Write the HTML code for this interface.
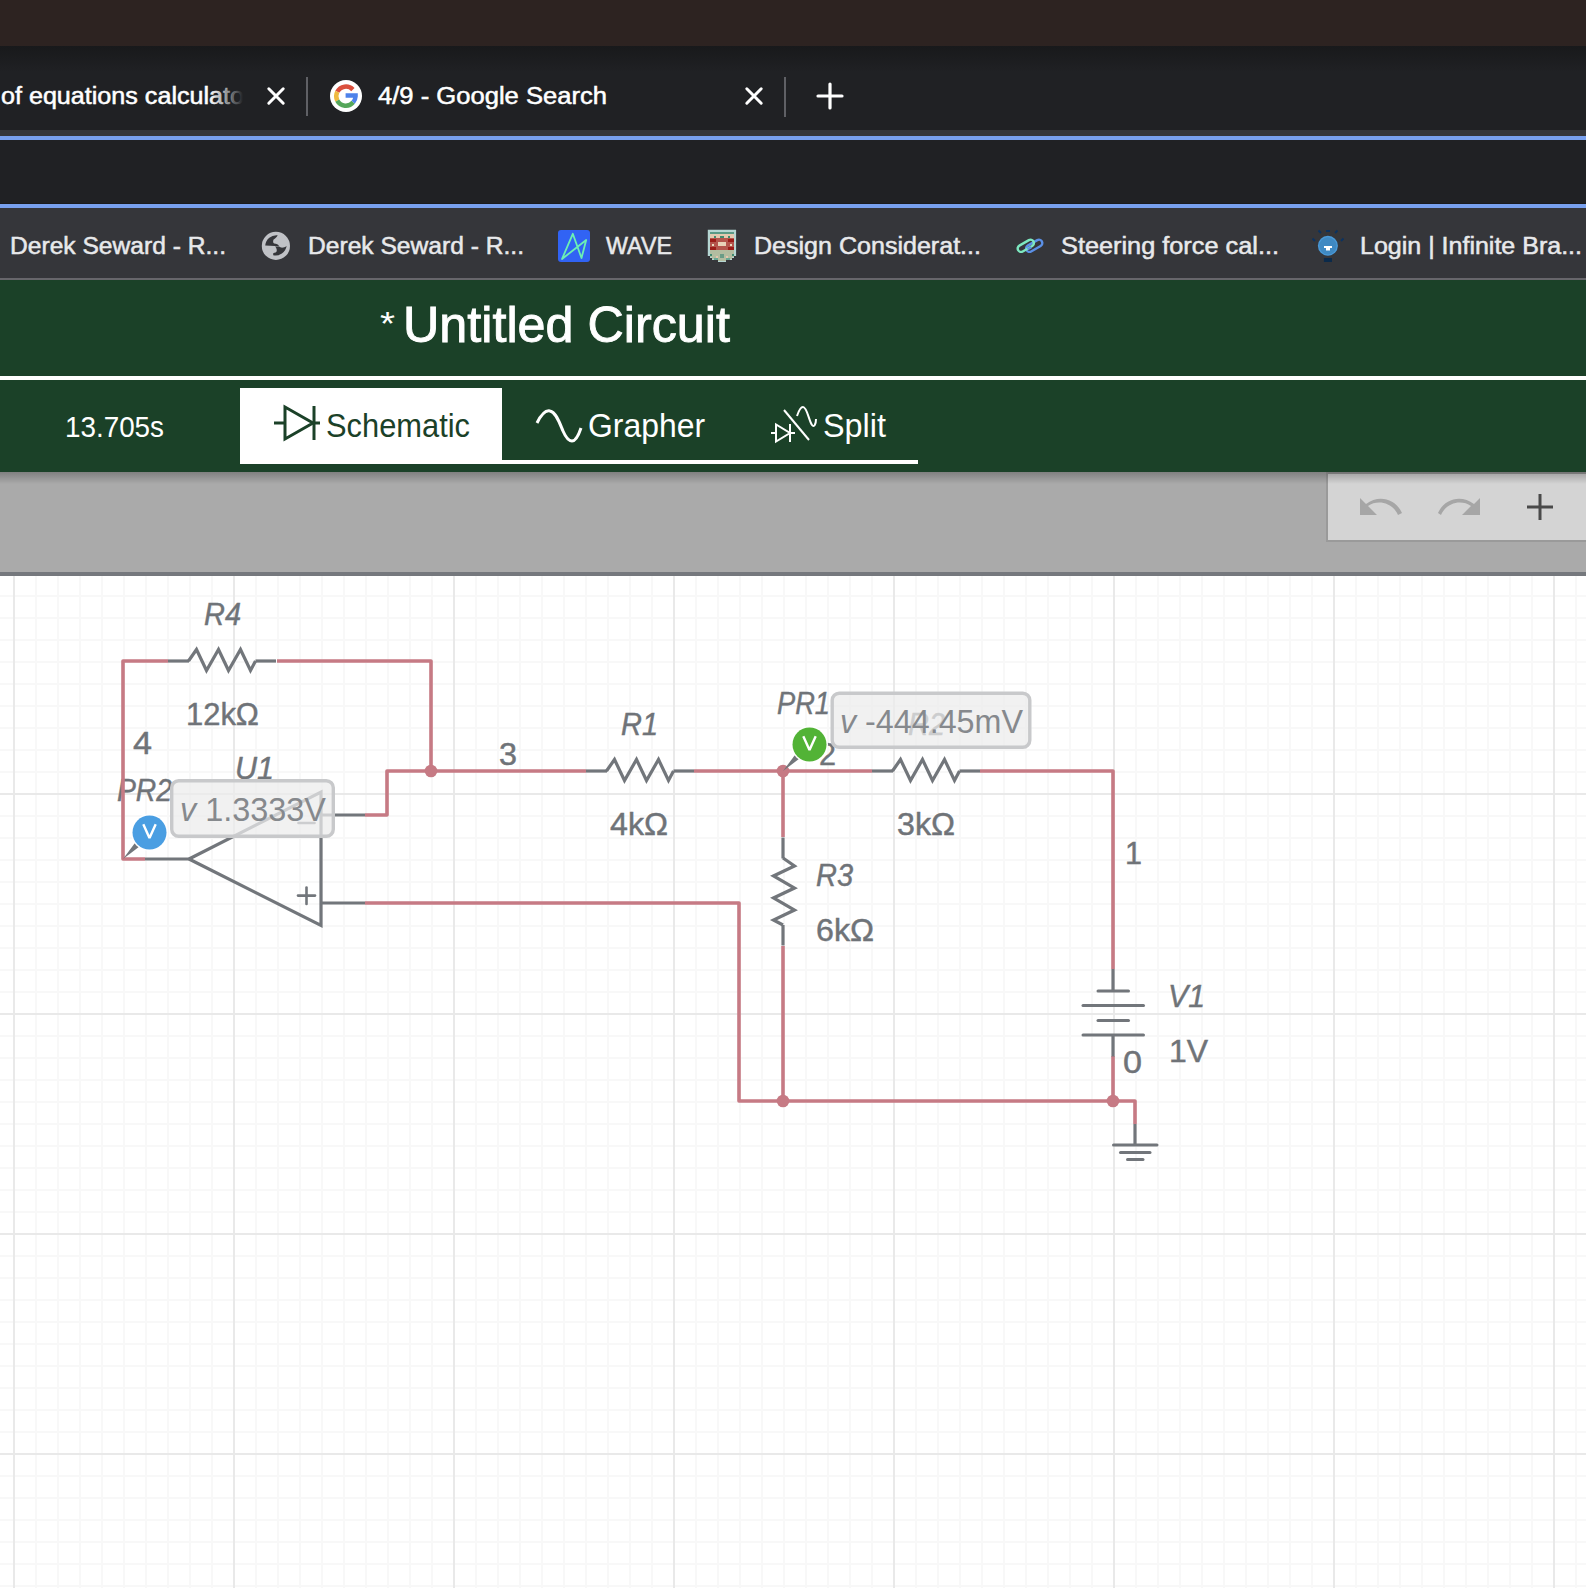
<!DOCTYPE html>
<html><head><meta charset="utf-8"><title>Untitled Circuit</title>
<style>html,body{margin:0;padding:0;width:1586px;height:1588px;overflow:hidden;background:#fff;font-family:"Liberation Sans",sans-serif}svg{display:block}</style>
</head><body><svg width="1586" height="1588" viewBox="0 0 1586 1588" font-family="'Liberation Sans', sans-serif"><rect x="0" y="0" width="1586" height="46" fill="#2d2321"/>
<rect x="0" y="46" width="1586" height="84" fill="#202124"/>
<defs><linearGradient id="tabg" x1="0" x2="0" y1="0" y2="1"><stop offset="0" stop-color="#18191b"/><stop offset="1" stop-color="#202124"/></linearGradient></defs>
<rect x="0" y="46" width="1586" height="26" fill="url(#tabg)"/>
<rect x="0" y="130" width="1586" height="6" fill="#35363a"/>
<rect x="0" y="136" width="1586" height="4" fill="#78a0ee"/>
<rect x="0" y="140" width="1586" height="64" fill="#202124"/>
<rect x="0" y="203" width="1586" height="1" fill="#1a1b1d"/>
<rect x="0" y="204" width="1586" height="4" fill="#78a0ee"/>
<rect x="0" y="208" width="1586" height="70" fill="#35363a"/>
<rect x="0" y="278" width="1586" height="2" fill="#67666b"/>
<defs><linearGradient id="fade" gradientUnits="userSpaceOnUse" x1="209" x2="243" y1="0" y2="0"><stop offset="0" stop-color="#ffffff"/><stop offset="1" stop-color="#ffffff" stop-opacity="0"/></linearGradient></defs>
<text x="1" y="104" font-size="23.5" fill="url(#fade)" textLength="243" lengthAdjust="spacingAndGlyphs" text-anchor="start"  stroke="url(#fade)" stroke-width="0.5">of equations calculato</text>
<path d="M268.8 88.8 L283.2 103.2 M283.2 88.8 L268.8 103.2" stroke="#ffffff" stroke-width="3" stroke-linecap="round"/>
<rect x="306" y="77" width="2" height="39" fill="#5f6065"/>
<circle cx="346" cy="96" r="16" fill="#ffffff"/>
<g transform="translate(345.9 96)" fill="none" stroke-width="4.5"><path d="M7.0 -6.4 A9.65 9.65 0 0 0 -8.6 -4.2" stroke="#da4f3d"/><path d="M-8.6 -4.2 A9.65 9.65 0 0 0 -8.6 4.6" stroke="#efba41"/><path d="M-8.6 4.6 A9.65 9.65 0 0 0 7.3 6.3" stroke="#55a65a"/><path d="M7.3 6.3 A9.65 9.65 0 0 0 9.65 0.5 V-0.4 H-0.3" stroke="#4e82ea"/></g>
<text x="378" y="104" font-size="23.5" fill="#ffffff" textLength="229" lengthAdjust="spacingAndGlyphs" text-anchor="start"  stroke="#ffffff" stroke-width="0.5">4/9 - Google Search</text>
<path d="M746.8 88.8 L761.2 103.2 M761.2 88.8 L746.8 103.2" stroke="#ffffff" stroke-width="3" stroke-linecap="round"/>
<rect x="784" y="77" width="2" height="40" fill="#5f6065"/>
<path d="M830 84 V108 M818 96 H842" stroke="#ffffff" stroke-width="3.2" stroke-linecap="round"/>
<text x="10" y="254" font-size="23.5" fill="#e8e9eb" textLength="216" lengthAdjust="spacingAndGlyphs" text-anchor="start"  stroke="#e8e9eb" stroke-width="0.5">Derek Seward - R...</text>
<circle cx="275.9" cy="245.9" r="14.1" fill="#c0c2c6"/>
<path d="M265.2 245.4 A11.2 11.2 0 0 1 277.7 235.3 C276.6 237.5 275.2 238.5 273.6 239.6 C272.8 241.5 273.0 243.0 274.2 243.6 C276.5 244.0 278.4 244.4 279.1 246.3 L274.9 246.0 Z" fill="#35363a"/><path d="M286.6 246.1 A11.2 11.2 0 0 1 273.2 255.3 L273.2 253.3 C274.8 252.6 276.8 252.6 276.8 250.5 C276.7 248.9 276.2 247.6 275.0 246.6 L279.3 246.6 C280.0 247.4 281.5 247.9 283.3 247.6 C284.7 247.4 285.6 246.9 286.6 246.1 Z" fill="#35363a"/>
<text x="308" y="254" font-size="23.5" fill="#e8e9eb" textLength="216" lengthAdjust="spacingAndGlyphs" text-anchor="start"  stroke="#e8e9eb" stroke-width="0.5">Derek Seward - R...</text>
<rect x="558" y="230" width="32" height="32" rx="3" fill="#3163f4"/>
<path d="M562 259 L572.8 233.8 L581.5 258 L586.2 240 Z" stroke="#6cf0b4" stroke-width="1.8" fill="none" stroke-linejoin="round"/>
<text x="606" y="254" font-size="23.5" fill="#e8e9eb" textLength="66" lengthAdjust="spacingAndGlyphs" text-anchor="start"  stroke="#e8e9eb" stroke-width="0.5">WAVE</text>
<path d="M707.8 229.8 H736.1 V256 H734 V258 H732 V260 H726 V262 H718 V260 H712 V258 H710 V256 H707.8 Z" fill="#b5d6d3"/><path d="M710 232 H734 V257 H732 V259 H726 V261 H718 V259 H712 V257 H710 Z" fill="#b3bda0"/><rect x="710" y="232" width="24" height="2" fill="#5a9a86"/><rect x="710" y="234" width="24" height="4" fill="#e3c9b0"/><rect x="714" y="236" width="2" height="2" fill="#3f8a70"/><rect x="720" y="236" width="4" height="2" fill="#3f8a70"/><rect x="728" y="236" width="2" height="2" fill="#3f8a70"/><rect x="710" y="238" width="24" height="12" fill="#b4554c"/><rect x="710" y="239" width="6" height="3" fill="#9b1d18"/><rect x="728" y="239" width="6" height="3" fill="#9b1d18"/><rect x="710" y="247" width="6" height="3" fill="#9b1d18"/><rect x="728" y="247" width="6" height="3" fill="#9b1d18"/><rect x="718" y="242" width="8" height="4" fill="#e8d2b8"/><rect x="712" y="244" width="2" height="2" fill="#eadcc0"/><rect x="730" y="244" width="2" height="2" fill="#eadcc0"/><rect x="720" y="254" width="4" height="4" fill="#6a9c86"/><rect x="716" y="256" width="2" height="2" fill="#e6c6ae"/><rect x="726" y="256" width="2" height="2" fill="#e6c6ae"/><rect x="710" y="254" width="2" height="2" fill="#3f8a70"/><rect x="732" y="254" width="2" height="2" fill="#3f8a70"/><rect x="714" y="258" width="4" height="2" fill="#6aa894"/><rect x="726" y="258" width="4" height="2" fill="#6aa894"/>
<text x="754" y="254" font-size="23.5" fill="#e8e9eb" textLength="227" lengthAdjust="spacingAndGlyphs" text-anchor="start"  stroke="#e8e9eb" stroke-width="0.5">Design Considerat...</text>
<g fill="none" stroke-width="2.4"><rect transform="translate(1034.2 245.8) rotate(-30)" x="-8.85" y="-3.35" width="17.7" height="6.7" rx="3.35" stroke="#5b90e6"/><rect transform="translate(1025.8 245.8) rotate(-30)" x="-8.85" y="-3.35" width="17.7" height="6.7" rx="3.35" stroke="#7de8c0"/><path d="M1027.6 249.3 L1031.3 247.2" stroke="#5b90e6"/></g>
<text x="1061" y="254" font-size="23.5" fill="#e8e9eb" textLength="218" lengthAdjust="spacingAndGlyphs" text-anchor="start"  stroke="#e8e9eb" stroke-width="0.5">Steering force cal...</text>
<circle cx="1327.9" cy="245.8" r="10" fill="#4a9ad8"/><circle cx="1327.9" cy="245.8" r="8.6" fill="#3f89c2"/><rect x="1323.9" y="258" width="8.1" height="4" fill="#0b2a4a"/><rect x="1324" y="246" width="8" height="2" fill="#ffffff"/><rect x="1326" y="247.5" width="4" height="3" fill="#ffffff"/><rect x="1326" y="230" width="4" height="2" fill="#0b3260"/><path d="M1318.5 230.5 l2.5 2.5 M1337.5 230.5 l-2.5 2.5 M1312.5 238.5 l2.5 2.5 M1343.5 238.5 l-2.5 2.5" stroke="#0b3260" stroke-width="1.8"/>
<text x="1360" y="254" font-size="23.5" fill="#e8e9eb" textLength="222" lengthAdjust="spacingAndGlyphs" text-anchor="start"  stroke="#e8e9eb" stroke-width="0.5">Login | Infinite Bra...</text>
<rect x="0" y="280" width="1586" height="96" fill="#1b4128"/>
<rect x="0" y="376" width="1586" height="4" fill="#ffffff"/>
<rect x="0" y="380" width="1586" height="92" fill="#1b4128"/>
<text x="380" y="335" font-size="33" fill="#ffffff" textLength="15" lengthAdjust="spacingAndGlyphs" text-anchor="start" >*</text>
<text x="403" y="342" font-size="50" fill="#ffffff" textLength="327" lengthAdjust="spacingAndGlyphs" text-anchor="start"  stroke="#ffffff" stroke-width="0.9">Untitled Circuit</text>
<text x="65" y="437" font-size="30" fill="#ffffff" textLength="99" lengthAdjust="spacingAndGlyphs" text-anchor="start" >13.705s</text>
<rect x="240" y="388" width="262" height="76" fill="#ffffff"/>
<rect x="502" y="460" width="416" height="4" fill="#ffffff"/>
<g stroke="#1b4128" stroke-width="3" fill="none"><path d="M274 423 H285 M313 423 H320"/><path d="M285 407 V439 L313 423 Z"/><path d="M314 406 V440"/></g>
<text x="326" y="437" font-size="33" fill="#1b4128" textLength="144" lengthAdjust="spacingAndGlyphs" text-anchor="start" >Schematic</text>
<path d="M537 423 C542 413 546 410 550 411 C556 412 560 424 563 431 C566 438 569 441 572 441 C576 441 579 434 581 428" stroke="#ffffff" stroke-width="3" fill="none"/>
<text x="588" y="437" font-size="33" fill="#ffffff" textLength="117" lengthAdjust="spacingAndGlyphs" text-anchor="start" >Grapher</text>
<g stroke="#ffffff" stroke-width="2" fill="none"><path d="M771 433 H776 M790 433 H795"/><path d="M776 424.5 V441.5 L790 433 Z"/><path d="M790 424 V442"/><path d="M784 410 L809 440"/><path d="M797 416 C799 410 801 407 803 407 C807 407 809 421 812 425 C814 428 816 424 816 419"/></g>
<text x="823" y="437" font-size="33" fill="#ffffff" textLength="63" lengthAdjust="spacingAndGlyphs" text-anchor="start" >Split</text>
<rect x="0" y="472" width="1586" height="100" fill="#aaaaaa"/>
<defs><linearGradient id="tsh" x1="0" x2="0" y1="0" y2="1"><stop offset="0" stop-color="#000" stop-opacity="0.25"/><stop offset="1" stop-color="#000" stop-opacity="0"/></linearGradient></defs>
<rect x="0" y="472" width="1586" height="12" fill="url(#tsh)"/>
<rect x="1326" y="472" width="260" height="70" fill="#9a9a9a"/>
<rect x="1328" y="474" width="258" height="66" fill="#d4d4d4"/>
<rect x="1326" y="472" width="260" height="12" fill="url(#tsh)"/>
<g fill="#a6a6a6"><path d="M1398 515 C1393 503 1378 499 1368 506 L1377 515 H1360 V498 L1366 504 C1379 494 1396 499 1402 513 Z"/><path d="M1441 515 C1446 503 1461 499 1471 506 L1462 515 H1480 V498 L1474 504 C1461 494 1444 499 1438 513 Z"/></g>
<path d="M1540 494 V520 M1527 507 H1553" stroke="#4a4a4a" stroke-width="3"/>
<rect x="0" y="572" width="1586" height="4" fill="#75787d"/>
<rect x="0" y="576" width="1586" height="1012" fill="#ffffff"/>
<rect x="35" y="576" width="2" height="1012" fill="#f8f8f8"/><rect x="57" y="576" width="2" height="1012" fill="#f8f8f8"/><rect x="79" y="576" width="2" height="1012" fill="#f8f8f8"/><rect x="101" y="576" width="2" height="1012" fill="#f8f8f8"/><rect x="123" y="576" width="2" height="1012" fill="#f8f8f8"/><rect x="145" y="576" width="2" height="1012" fill="#f8f8f8"/><rect x="167" y="576" width="2" height="1012" fill="#f8f8f8"/><rect x="189" y="576" width="2" height="1012" fill="#f8f8f8"/><rect x="211" y="576" width="2" height="1012" fill="#f8f8f8"/><rect x="255" y="576" width="2" height="1012" fill="#f8f8f8"/><rect x="277" y="576" width="2" height="1012" fill="#f8f8f8"/><rect x="299" y="576" width="2" height="1012" fill="#f8f8f8"/><rect x="321" y="576" width="2" height="1012" fill="#f8f8f8"/><rect x="343" y="576" width="2" height="1012" fill="#f8f8f8"/><rect x="365" y="576" width="2" height="1012" fill="#f8f8f8"/><rect x="387" y="576" width="2" height="1012" fill="#f8f8f8"/><rect x="409" y="576" width="2" height="1012" fill="#f8f8f8"/><rect x="431" y="576" width="2" height="1012" fill="#f8f8f8"/><rect x="475" y="576" width="2" height="1012" fill="#f8f8f8"/><rect x="497" y="576" width="2" height="1012" fill="#f8f8f8"/><rect x="519" y="576" width="2" height="1012" fill="#f8f8f8"/><rect x="541" y="576" width="2" height="1012" fill="#f8f8f8"/><rect x="563" y="576" width="2" height="1012" fill="#f8f8f8"/><rect x="585" y="576" width="2" height="1012" fill="#f8f8f8"/><rect x="607" y="576" width="2" height="1012" fill="#f8f8f8"/><rect x="629" y="576" width="2" height="1012" fill="#f8f8f8"/><rect x="651" y="576" width="2" height="1012" fill="#f8f8f8"/><rect x="695" y="576" width="2" height="1012" fill="#f8f8f8"/><rect x="717" y="576" width="2" height="1012" fill="#f8f8f8"/><rect x="739" y="576" width="2" height="1012" fill="#f8f8f8"/><rect x="761" y="576" width="2" height="1012" fill="#f8f8f8"/><rect x="783" y="576" width="2" height="1012" fill="#f8f8f8"/><rect x="805" y="576" width="2" height="1012" fill="#f8f8f8"/><rect x="827" y="576" width="2" height="1012" fill="#f8f8f8"/><rect x="849" y="576" width="2" height="1012" fill="#f8f8f8"/><rect x="871" y="576" width="2" height="1012" fill="#f8f8f8"/><rect x="915" y="576" width="2" height="1012" fill="#f8f8f8"/><rect x="937" y="576" width="2" height="1012" fill="#f8f8f8"/><rect x="959" y="576" width="2" height="1012" fill="#f8f8f8"/><rect x="981" y="576" width="2" height="1012" fill="#f8f8f8"/><rect x="1003" y="576" width="2" height="1012" fill="#f8f8f8"/><rect x="1025" y="576" width="2" height="1012" fill="#f8f8f8"/><rect x="1047" y="576" width="2" height="1012" fill="#f8f8f8"/><rect x="1069" y="576" width="2" height="1012" fill="#f8f8f8"/><rect x="1091" y="576" width="2" height="1012" fill="#f8f8f8"/><rect x="1135" y="576" width="2" height="1012" fill="#f8f8f8"/><rect x="1157" y="576" width="2" height="1012" fill="#f8f8f8"/><rect x="1179" y="576" width="2" height="1012" fill="#f8f8f8"/><rect x="1201" y="576" width="2" height="1012" fill="#f8f8f8"/><rect x="1223" y="576" width="2" height="1012" fill="#f8f8f8"/><rect x="1245" y="576" width="2" height="1012" fill="#f8f8f8"/><rect x="1267" y="576" width="2" height="1012" fill="#f8f8f8"/><rect x="1289" y="576" width="2" height="1012" fill="#f8f8f8"/><rect x="1311" y="576" width="2" height="1012" fill="#f8f8f8"/><rect x="1355" y="576" width="2" height="1012" fill="#f8f8f8"/><rect x="1377" y="576" width="2" height="1012" fill="#f8f8f8"/><rect x="1399" y="576" width="2" height="1012" fill="#f8f8f8"/><rect x="1421" y="576" width="2" height="1012" fill="#f8f8f8"/><rect x="1443" y="576" width="2" height="1012" fill="#f8f8f8"/><rect x="1465" y="576" width="2" height="1012" fill="#f8f8f8"/><rect x="1487" y="576" width="2" height="1012" fill="#f8f8f8"/><rect x="1509" y="576" width="2" height="1012" fill="#f8f8f8"/><rect x="1531" y="576" width="2" height="1012" fill="#f8f8f8"/><rect x="1575" y="576" width="2" height="1012" fill="#f8f8f8"/><rect x="0" y="595" width="1586" height="2" fill="#f8f8f8"/><rect x="0" y="617" width="1586" height="2" fill="#f8f8f8"/><rect x="0" y="639" width="1586" height="2" fill="#f8f8f8"/><rect x="0" y="661" width="1586" height="2" fill="#f8f8f8"/><rect x="0" y="683" width="1586" height="2" fill="#f8f8f8"/><rect x="0" y="705" width="1586" height="2" fill="#f8f8f8"/><rect x="0" y="727" width="1586" height="2" fill="#f8f8f8"/><rect x="0" y="749" width="1586" height="2" fill="#f8f8f8"/><rect x="0" y="771" width="1586" height="2" fill="#f8f8f8"/><rect x="0" y="815" width="1586" height="2" fill="#f8f8f8"/><rect x="0" y="837" width="1586" height="2" fill="#f8f8f8"/><rect x="0" y="859" width="1586" height="2" fill="#f8f8f8"/><rect x="0" y="881" width="1586" height="2" fill="#f8f8f8"/><rect x="0" y="903" width="1586" height="2" fill="#f8f8f8"/><rect x="0" y="925" width="1586" height="2" fill="#f8f8f8"/><rect x="0" y="947" width="1586" height="2" fill="#f8f8f8"/><rect x="0" y="969" width="1586" height="2" fill="#f8f8f8"/><rect x="0" y="991" width="1586" height="2" fill="#f8f8f8"/><rect x="0" y="1035" width="1586" height="2" fill="#f8f8f8"/><rect x="0" y="1057" width="1586" height="2" fill="#f8f8f8"/><rect x="0" y="1079" width="1586" height="2" fill="#f8f8f8"/><rect x="0" y="1101" width="1586" height="2" fill="#f8f8f8"/><rect x="0" y="1123" width="1586" height="2" fill="#f8f8f8"/><rect x="0" y="1145" width="1586" height="2" fill="#f8f8f8"/><rect x="0" y="1167" width="1586" height="2" fill="#f8f8f8"/><rect x="0" y="1189" width="1586" height="2" fill="#f8f8f8"/><rect x="0" y="1211" width="1586" height="2" fill="#f8f8f8"/><rect x="0" y="1255" width="1586" height="2" fill="#f8f8f8"/><rect x="0" y="1277" width="1586" height="2" fill="#f8f8f8"/><rect x="0" y="1299" width="1586" height="2" fill="#f8f8f8"/><rect x="0" y="1321" width="1586" height="2" fill="#f8f8f8"/><rect x="0" y="1343" width="1586" height="2" fill="#f8f8f8"/><rect x="0" y="1365" width="1586" height="2" fill="#f8f8f8"/><rect x="0" y="1387" width="1586" height="2" fill="#f8f8f8"/><rect x="0" y="1409" width="1586" height="2" fill="#f8f8f8"/><rect x="0" y="1431" width="1586" height="2" fill="#f8f8f8"/><rect x="0" y="1475" width="1586" height="2" fill="#f8f8f8"/><rect x="0" y="1497" width="1586" height="2" fill="#f8f8f8"/><rect x="0" y="1519" width="1586" height="2" fill="#f8f8f8"/><rect x="0" y="1541" width="1586" height="2" fill="#f8f8f8"/><rect x="0" y="1563" width="1586" height="2" fill="#f8f8f8"/><rect x="0" y="1585" width="1586" height="2" fill="#f8f8f8"/><rect x="13" y="576" width="2" height="1012" fill="#e9e9e9"/><rect x="233" y="576" width="2" height="1012" fill="#e9e9e9"/><rect x="453" y="576" width="2" height="1012" fill="#e9e9e9"/><rect x="673" y="576" width="2" height="1012" fill="#e9e9e9"/><rect x="893" y="576" width="2" height="1012" fill="#e9e9e9"/><rect x="1113" y="576" width="2" height="1012" fill="#e9e9e9"/><rect x="1333" y="576" width="2" height="1012" fill="#e9e9e9"/><rect x="1553" y="576" width="2" height="1012" fill="#e9e9e9"/><rect x="0" y="793" width="1586" height="2" fill="#e9e9e9"/><rect x="0" y="1013" width="1586" height="2" fill="#e9e9e9"/><rect x="0" y="1233" width="1586" height="2" fill="#e9e9e9"/><rect x="0" y="1453" width="1586" height="2" fill="#e9e9e9"/>
<text x="204" y="624.5" font-size="31" fill="#6f7378" font-style="italic" textLength="37" lengthAdjust="spacingAndGlyphs" text-anchor="start"  stroke="#6f7378" stroke-width="0.45">R4</text><text x="186" y="725" font-size="31" fill="#6f7378" textLength="73" lengthAdjust="spacingAndGlyphs" text-anchor="start"  stroke="#6f7378" stroke-width="0.45">12kΩ</text><text x="133" y="753.5" font-size="31" fill="#6f7378" textLength="19" lengthAdjust="spacingAndGlyphs" text-anchor="start"  stroke="#6f7378" stroke-width="0.45">4</text><text x="235" y="778.5" font-size="31" fill="#6f7378" font-style="italic" textLength="39" lengthAdjust="spacingAndGlyphs" text-anchor="start"  stroke="#6f7378" stroke-width="0.45">U1</text><text x="117" y="801" font-size="31" fill="#6f7378" font-style="italic" textLength="55" lengthAdjust="spacingAndGlyphs" text-anchor="start"  stroke="#6f7378" stroke-width="0.45">PR2</text><text x="499" y="765" font-size="31" fill="#6f7378" textLength="18" lengthAdjust="spacingAndGlyphs" text-anchor="start"  stroke="#6f7378" stroke-width="0.45">3</text><text x="621" y="735" font-size="31" fill="#6f7378" font-style="italic" textLength="37" lengthAdjust="spacingAndGlyphs" text-anchor="start"  stroke="#6f7378" stroke-width="0.45">R1</text><text x="610" y="834.5" font-size="31" fill="#6f7378" textLength="58" lengthAdjust="spacingAndGlyphs" text-anchor="start"  stroke="#6f7378" stroke-width="0.45">4kΩ</text><text x="908" y="735" font-size="31" fill="#6f7378" font-style="italic" textLength="37" lengthAdjust="spacingAndGlyphs" text-anchor="start"  stroke="#6f7378" stroke-width="0.45">R2</text><text x="897" y="834.5" font-size="31" fill="#6f7378" textLength="58" lengthAdjust="spacingAndGlyphs" text-anchor="start"  stroke="#6f7378" stroke-width="0.45">3kΩ</text><text x="816" y="886" font-size="31" fill="#6f7378" font-style="italic" textLength="37" lengthAdjust="spacingAndGlyphs" text-anchor="start"  stroke="#6f7378" stroke-width="0.45">R3</text><text x="816" y="941" font-size="31" fill="#6f7378" textLength="58" lengthAdjust="spacingAndGlyphs" text-anchor="start"  stroke="#6f7378" stroke-width="0.45">6kΩ</text><text x="1125" y="864" font-size="31" fill="#6f7378" textLength="17" lengthAdjust="spacingAndGlyphs" text-anchor="start"  stroke="#6f7378" stroke-width="0.45">1</text><text x="1168" y="1006.5" font-size="31" fill="#6f7378" font-style="italic" textLength="37" lengthAdjust="spacingAndGlyphs" text-anchor="start"  stroke="#6f7378" stroke-width="0.45">V1</text><text x="1169" y="1061.5" font-size="31" fill="#6f7378" textLength="39" lengthAdjust="spacingAndGlyphs" text-anchor="start"  stroke="#6f7378" stroke-width="0.45">1V</text><text x="1123" y="1073" font-size="31" fill="#6f7378" textLength="19" lengthAdjust="spacingAndGlyphs" text-anchor="start"  stroke="#6f7378" stroke-width="0.45">0</text><text x="819" y="764.7" font-size="31" fill="#6f7378" textLength="17" lengthAdjust="spacingAndGlyphs" text-anchor="start"  stroke="#6f7378" stroke-width="0.45">2</text><text x="777" y="713.5" font-size="31" fill="#6f7378" font-style="italic" textLength="53" lengthAdjust="spacingAndGlyphs" text-anchor="start"  stroke="#6f7378" stroke-width="0.45">PR1</text>
<path d="M168 661 L123 661 L123 859 L145 859" stroke="#c67a84" stroke-width="3.6" fill="none" stroke-linejoin="round" stroke-linecap="butt"/><path d="M277 661 L431 661 L431 771" stroke="#c67a84" stroke-width="3.6" fill="none" stroke-linejoin="round" stroke-linecap="butt"/><path d="M365 815 L387 815 L387 771 L586 771" stroke="#c67a84" stroke-width="3.6" fill="none" stroke-linejoin="round" stroke-linecap="butt"/><path d="M694 771 L872 771" stroke="#c67a84" stroke-width="3.6" fill="none" stroke-linejoin="round" stroke-linecap="butt"/><path d="M980 771 L1113 771 L1113 969" stroke="#c67a84" stroke-width="3.6" fill="none" stroke-linejoin="round" stroke-linecap="butt"/><path d="M783 771 L783 837" stroke="#c67a84" stroke-width="3.6" fill="none" stroke-linejoin="round" stroke-linecap="butt"/><path d="M783 946 L783 1101" stroke="#c67a84" stroke-width="3.6" fill="none" stroke-linejoin="round" stroke-linecap="butt"/><path d="M365 903 L739 903 L739 1101 L1135 1101 L1135 1124" stroke="#c67a84" stroke-width="3.6" fill="none" stroke-linejoin="round" stroke-linecap="butt"/><path d="M1113 1056 L1113 1101" stroke="#c67a84" stroke-width="3.6" fill="none" stroke-linejoin="round" stroke-linecap="butt"/><circle cx="431" cy="771" r="6.3" fill="#c67a84"/><circle cx="783" cy="771" r="6.3" fill="#c67a84"/><circle cx="783" cy="1101" r="6.3" fill="#c67a84"/><circle cx="1113" cy="1101" r="6.3" fill="#c67a84"/><path d="M168 661 L189 661" stroke="#72767b" stroke-width="3.2" fill="none" stroke-linejoin="miter" stroke-linecap="butt"/><path d="M255.5 661 L276 661" stroke="#72767b" stroke-width="3.2" fill="none" stroke-linejoin="miter" stroke-linecap="butt"/><path d="M188.5 661 L196.5 649.5 L206.5 670.5 L218.5 649.5 L228.5 670.5 L240.5 649.5 L250.5 670.5 L255.5 661" stroke="#72767b" stroke-width="3.2" fill="none" stroke-linejoin="miter" stroke-linecap="butt"/><path d="M586 771 L607 771" stroke="#72767b" stroke-width="3.2" fill="none" stroke-linejoin="miter" stroke-linecap="butt"/><path d="M673.5 771 L694 771" stroke="#72767b" stroke-width="3.2" fill="none" stroke-linejoin="miter" stroke-linecap="butt"/><path d="M606.5 771 L614.5 759.5 L624.5 780.5 L636.5 759.5 L646.5 780.5 L658.5 759.5 L668.5 780.5 L673.5 771" stroke="#72767b" stroke-width="3.2" fill="none" stroke-linejoin="miter" stroke-linecap="butt"/><path d="M872 771 L893 771" stroke="#72767b" stroke-width="3.2" fill="none" stroke-linejoin="miter" stroke-linecap="butt"/><path d="M959.5 771 L980 771" stroke="#72767b" stroke-width="3.2" fill="none" stroke-linejoin="miter" stroke-linecap="butt"/><path d="M892.5 771 L900.5 759.5 L910.5 780.5 L922.5 759.5 L932.5 780.5 L944.5 759.5 L954.5 780.5 L959.5 771" stroke="#72767b" stroke-width="3.2" fill="none" stroke-linejoin="miter" stroke-linecap="butt"/><path d="M783 837.5 L783 858.5" stroke="#72767b" stroke-width="3.2" fill="none" stroke-linejoin="miter" stroke-linecap="butt"/><path d="M783 925.0 L783 945.5" stroke="#72767b" stroke-width="3.2" fill="none" stroke-linejoin="miter" stroke-linecap="butt"/><path d="M783 858.0 L794.5 866.0 L773.5 876.0 L794.5 888.0 L773.5 898.0 L794.5 910.0 L773.5 920.0 L783 925.0" stroke="#72767b" stroke-width="3.2" fill="none" stroke-linejoin="miter" stroke-linecap="butt"/><path d="M189 859 L321 792 L321 925.5 L189 859" stroke="#72767b" stroke-width="3.2" fill="none" stroke-linejoin="miter" stroke-linecap="butt"/><path d="M145 859 L189 859" stroke="#72767b" stroke-width="3.2" fill="none" stroke-linejoin="miter" stroke-linecap="butt"/><path d="M321 815 L365 815" stroke="#72767b" stroke-width="3.2" fill="none" stroke-linejoin="miter" stroke-linecap="butt"/><path d="M321 903 L365 903" stroke="#72767b" stroke-width="3.2" fill="none" stroke-linejoin="miter" stroke-linecap="butt"/><path d="M298 895.6 L315 895.6" stroke="#72767b" stroke-width="2.6" fill="none" stroke-linejoin="miter" stroke-linecap="round"/><path d="M306.5 887.5 L306.5 904" stroke="#72767b" stroke-width="2.6" fill="none" stroke-linejoin="miter" stroke-linecap="round"/><path d="M298.5 823 L314.5 823" stroke="#72767b" stroke-width="2.6" fill="none" stroke-linejoin="miter" stroke-linecap="round"/><path d="M1113 969 L1113 991" stroke="#72767b" stroke-width="3.2" fill="none" stroke-linejoin="miter" stroke-linecap="butt"/><path d="M1098 991 L1128.5 991" stroke="#72767b" stroke-width="3" fill="none" stroke-linejoin="miter" stroke-linecap="round"/><path d="M1083 1005.5 L1143.5 1005.5" stroke="#72767b" stroke-width="3" fill="none" stroke-linejoin="miter" stroke-linecap="round"/><path d="M1098 1020.5 L1128.5 1020.5" stroke="#72767b" stroke-width="3" fill="none" stroke-linejoin="miter" stroke-linecap="round"/><path d="M1083 1035 L1143.5 1035" stroke="#72767b" stroke-width="3" fill="none" stroke-linejoin="miter" stroke-linecap="round"/><path d="M1113 1035 L1113 1056.5" stroke="#72767b" stroke-width="3.2" fill="none" stroke-linejoin="miter" stroke-linecap="butt"/><path d="M1135 1124 L1135 1145" stroke="#72767b" stroke-width="3.2" fill="none" stroke-linejoin="miter" stroke-linecap="butt"/><path d="M1113.5 1145 L1157 1145" stroke="#72767b" stroke-width="3" fill="none" stroke-linejoin="miter" stroke-linecap="round"/><path d="M1120.5 1152.4 L1150 1152.4" stroke="#72767b" stroke-width="3" fill="none" stroke-linejoin="miter" stroke-linecap="round"/><path d="M1127.5 1159.5 L1143 1159.5" stroke="#72767b" stroke-width="3" fill="none" stroke-linejoin="miter" stroke-linecap="round"/>
<rect x="171.7" y="780.7" width="161.6" height="55.6" rx="7" fill="#ececec" fill-opacity="0.74" stroke="#c8c9cb" stroke-width="3.4"/>
<text x="180" y="821" font-size="34" fill="#86898d" textLength="146" lengthAdjust="spacingAndGlyphs"><tspan font-style="italic">v</tspan> 1.3333V</text>
<rect x="832.2" y="693.2" width="197.6" height="54.1" rx="7" fill="#ececec" fill-opacity="0.74" stroke="#c8c9cb" stroke-width="3.4"/>
<text x="840" y="733" font-size="34" fill="#86898d" textLength="183" lengthAdjust="spacingAndGlyphs"><tspan font-style="italic">v</tspan> -444.45mV</text>
<path d="M136.63065658240484 840.8438600180012 L123 859 L141.15613998199873 845.3693434175951 Z" fill="#72767b"/><circle cx="149.5" cy="832.5" r="18.5" fill="#ffffff"/><circle cx="149.5" cy="832.5" r="17" fill="#4a9ee2"/><path d="M143.3 824.2 L149.5 838.1 L155.7 824.2" stroke="#ffffff" stroke-width="2.4" fill="none" stroke-linejoin="bevel"/>
<path d="M796.6306565824049 752.8438600180012 L783 771 L801.1561399819988 757.3693434175951 Z" fill="#72767b"/><circle cx="809.5" cy="744.5" r="18.5" fill="#ffffff"/><circle cx="809.5" cy="744.5" r="17" fill="#52b336"/><path d="M803.3 736.2 L809.5 750.1 L815.7 736.2" stroke="#ffffff" stroke-width="2.4" fill="none" stroke-linejoin="bevel"/></svg></body></html>
